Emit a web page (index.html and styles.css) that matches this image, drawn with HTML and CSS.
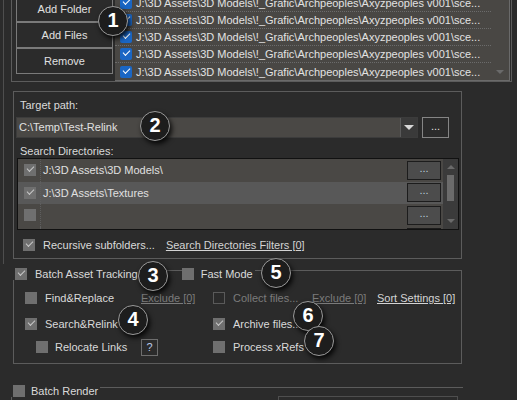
FILE: index.html
```html
<!DOCTYPE html>
<html lang="en">
<head>
  <meta charset="UTF-8" />
  <title>Relink Tool</title>
  <link rel="stylesheet" href="styles.css">
</head>
<body>
  <div class="screen">
    <div class="panel">
      <!-- file list group (scrolled, top cut off) -->
      <div class="files">
        <div class="file-buttons">
          <button class="btn">Add Folder</button>
          <button class="btn">Add Files</button>
          <button class="btn">Remove</button>
        </div>
        <div class="file-list">
          <div class="file-rows">
            <div class="file-row"><span class="cb blue"></span><span>J:\3D Assets\3D Models\!_Grafic\Archpeoples\Axyzpeoples v001\sce...</span></div>
            <div class="file-row"><span class="cb blue"></span><span>J:\3D Assets\3D Models\!_Grafic\Archpeoples\Axyzpeoples v001\sce...</span></div>
            <div class="file-row"><span class="cb blue"></span><span>J:\3D Assets\3D Models\!_Grafic\Archpeoples\Axyzpeoples v001\sce...</span></div>
            <div class="file-row"><span class="cb blue"></span><span>J:\3D Assets\3D Models\!_Grafic\Archpeoples\Axyzpeoples v001\sce...</span></div>
            <div class="file-row"><span class="cb blue"></span><span>J:\3D Assets\3D Models\!_Grafic\Archpeoples\Axyzpeoples v001\sce...</span></div>
          </div>
          <div class="file-scroll"><span class="arrow-down"></span></div>
        </div>
      </div>

      <!-- target path / search directories -->
      <div class="target">
        <div class="label">Target path:</div>
        <div class="combo-row">
          <div class="combo">
            <span class="combo-text">C:\Temp\Test-Relink</span>
            <span class="combo-drop"><span class="arrow-down light"></span></span>
          </div>
          <button class="dots-btn">...</button>
        </div>
        <div class="label">Search Directories:</div>
        <div class="dir-list">
          <div class="dir-rows">
            <div class="dir-row">
              <span class="dir-cb"><span class="cb checked"></span></span>
              <span class="dir-path">J:\3D Assets\3D Models\</span>
              <span class="dir-btn">...</span>
            </div>
            <div class="dir-row selected">
              <span class="dir-cb"><span class="cb checked"></span></span>
              <span class="dir-path">J:\3D Assets\Textures</span>
              <span class="dir-btn">...</span>
            </div>
            <div class="dir-row">
              <span class="dir-cb"><span class="cb"></span></span>
              <span class="dir-path"></span>
              <span class="dir-btn">...</span>
            </div>
            <div class="dir-row">
              <span class="dir-cb"></span>
              <span class="dir-path"></span>
              <span class="dir-btn"></span>
            </div>
          </div>
          <div class="dir-scroll">
            <span class="arrow-up"></span>
            <span class="thumb"></span>
            <span class="arrow-down"></span>
          </div>
        </div>
        <div class="recursive-row">
          <label class="check"><span class="cb checked"></span>Recursive subfolders...</label>
          <a class="link">Search Directories Filters [0]</a>
        </div>
      </div>
    </div>

    <!-- batch asset tracking -->
    <div class="group asset">
      <div class="group-head">
        <label class="head-item first"><span class="cb checked"></span>Batch Asset Tracking</label>
        <label class="head-item fast"><span class="cb"></span>Fast Mode</label>
      </div>
      <div class="asset-grid">
        <label class="check"><span class="cb"></span>Find&amp;Replace</label>
        <a class="link off">Exclude [0]</a>
        <label class="check off"><span class="cb hollow"></span>Collect files...</label>
        <a class="link off">Exclude [0]</a>
        <a class="link">Sort Settings [0]</a>

        <label class="check"><span class="cb checked"></span>Search&amp;Relink</label>
        <span></span>
        <label class="check"><span class="cb checked"></span>Archive files...</label>
        <span></span>
        <span></span>

        <label class="check sub"><span class="cb"></span>Relocate Links</label>
        <span><button class="help-btn">?</button></span>
        <label class="check"><span class="cb"></span>Process xRefs</label>
        <span></span>
        <span></span>
      </div>
    </div>

    <!-- batch render -->
    <div class="group render">
      <div class="group-head">
        <label class="head-item first"><span class="cb"></span>Batch Render</label>
      </div>
      <div class="render-box"></div>
    </div>

    <span class="badge" style="left:98px;top:6px">1</span>
    <span class="badge" style="left:140px;top:111px">2</span>
    <span class="badge" style="left:138px;top:261px">3</span>
    <span class="badge" style="left:118px;top:305px">4</span>
    <span class="badge" style="left:261px;top:258px">5</span>
    <span class="badge" style="left:293px;top:301px">6</span>
    <span class="badge" style="left:304px;top:326px">7</span>
  </div>
</body>
</html>
```

FILE: styles.css
```css
* { box-sizing: border-box; }
html, body { margin: 0; padding: 0; background: #2b2b2b; }
body { font-family: "Liberation Sans", Arial, sans-serif; font-size: 11px; color: #dadada; width: 517px; height: 400px; overflow: hidden; }
button { font-family: inherit; font-size: inherit; color: inherit; }
.screen { position: relative; display: flow-root; height: 400px; }

/* outer rollout */
.panel { margin-left: 3px; border-left: 1px solid #4e4e4e; padding-bottom: 5px; }

/* file list group */
.files { margin: -6px 5px 0 7px; border: 1px solid #5c5c5c; border-top-color: transparent; display: flex; gap: 2px; padding: 0 1px 0 4px; }
.file-buttons { display: flex; flex-direction: column; width: 97px; margin-top: 1px; }
.btn { height: 26px; background: #2b2b2b; border: 1px solid #7a7a7a; color: #e0e0e0; padding: 0; margin: 0; }
.file-list { flex: 1; display: flex; background: #494744; border-right: 1px solid #6a6a6a; border-bottom: 1px solid #6a6a6a; }
.file-rows { flex: 1; }
.file-row { height: 17px; display: flex; align-items: center; gap: 4px; padding-left: 5px; border-bottom: 1px dotted #6b6b6b; white-space: nowrap; overflow: hidden; color: #e2e2e2; }
.file-row:last-child { border-bottom: none; }
.file-scroll { width: 18px; display: flex; align-items: flex-end; justify-content: center; padding-bottom: 6px; }

/* checkboxes */
.cb { flex: none; display: inline-block; width: 12px; height: 12px; background: #6f6f6f; position: relative; }
.cb.checked::after, .cb.blue::after { content: ""; position: absolute; left: 3px; top: 2px; width: 6px; height: 3px; border-left: 1.5px solid #c8c8c8; border-bottom: 1.5px solid #c8c8c8; transform: rotate(-45deg); }
.cb.blue { background: #1a66c4; border-radius: 2px; }
.cb.blue::after { border-color: #fff; }
.cb.hollow { background: transparent; border: 1px solid #5a5a5a; }

.arrow-down, .arrow-up { width: 0; height: 0; border-left: 4px solid transparent; border-right: 4px solid transparent; }
.arrow-down { border-top: 4px solid #6a6a6a; }
.arrow-up { border-bottom: 4px solid #6a6a6a; }
.arrow-down.light { border-top-color: #d8d8d8; border-left-width: 5px; border-right-width: 5px; border-top-width: 5px; }

/* target frame */
.target { margin: 9px 0 0 9px; width: 449px; border: 1px solid #5c5c5c; padding: 6px 2px 6px 2px; }
.label { padding-left: 4px; height: 14px; line-height: 14px; }
.combo-row { display: flex; gap: 4px; margin: 5px 0 6px 0; }
.combo { width: 402px; height: 21px; display: flex; background: #4a4845; border: 1px solid #3c3c3c; }
.combo-text { flex: 1; line-height: 19px; padding-left: 2px; color: #e0e0e0; }
.combo-drop { width: 17px; display: flex; align-items: center; justify-content: center; background: #3a3a3a; border-left: 1px solid #5a5a5a; }
.dots-btn { width: 27px; height: 21px; background: #2b2b2b; border: 1px solid #858585; padding: 0 0 4px; color: #e0e0e0; }

.dir-list { margin: 0 0 0 1px; width: 442px; height: 72px; border: 1px solid #111; display: flex; overflow: hidden; }
.dir-rows { flex: 1; background: #4a4845; }
.dir-row { height: 22.5px; display: flex; align-items: center; }
.dir-row.selected { background: #585858; }
.dir-cb { width: 23px; height: 100%; display: flex; align-items: center; padding-left: 6px; border-right: 1px dotted #5e5e5e; }
.dir-path { flex: 1; padding-left: 2px; color: #e0e0e0; }
.dir-btn { width: 34px; height: 19px; margin-right: 2px; border: 1px solid #1c1c1c; text-align: center; line-height: 13px; color: #bcd; background: #4c4c4c; }
.dir-scroll { width: 15px; background: #3b3b3b; display: flex; flex-direction: column; align-items: center; padding: 6px 0 6px; gap: 6px; }
.dir-scroll .thumb { width: 7px; height: 26px; background: #6b6b6b; }
.dir-scroll .arrow-down { margin-top: auto; }

.recursive-row { display: flex; align-items: center; height: 14px; margin-top: 8px; padding-left: 7px; }
.check { display: flex; align-items: center; gap: 8px; white-space: nowrap; }
.recursive-row .link { margin-left: 11px; }
.link { color: #d4d4d4; text-decoration: underline; white-space: nowrap; }
.link.off, .check.off { color: #7b7b7b; }

/* group boxes */
.group { border: 1px solid #5c5c5c; }
.group-head { display: flex; margin-top: -4px; height: 13px; }
.head-item { display: flex; align-items: center; gap: 8px; background: #2b2b2b; white-space: nowrap; }
.head-item.first { margin-left: -3px; padding: 0 2px 0 4px; }
.head-item.fast { margin-left: 42px; padding: 0 2px 0 0; gap: 7px; }

.asset { margin: 6px 0 0 13px; width: 449px; height: 94px; }
.asset-grid { display: grid; grid-template-columns: 116px 72px 99px 65px auto; grid-template-rows: 26px 26px 20px; align-items: center; margin-top: 5px; padding-left: 11px; }
.check.sub { padding-left: 11px; gap: 7px; }
.help-btn { width: 17px; height: 17px; background: #2b2b2b; border: 1px solid #6e6e6e; padding: 0; color: #b9c9e9; display: block; }

.render { margin: 23px 0 0 11px; width: 452px; height: 40px; border-right: none; border-bottom: none; }
.render .head-item.first { margin-left: -3px; padding-left: 4px; gap: 6px; }
.render-box { margin: -1px 0 0 266px; width: 180px; height: 30px; border: 1px solid #4e4e4e; }

/* numbered callouts */
.badge { position: absolute; width: 30px; height: 30px; border-radius: 50%; background: #1d1d1d; border: 1.5px solid #9a9a9a; color: #fff; font: bold 20px/27px "Liberation Sans", Arial, sans-serif; text-align: center; box-shadow: 2px 3px 5px rgba(0,0,0,0.85); }
```
